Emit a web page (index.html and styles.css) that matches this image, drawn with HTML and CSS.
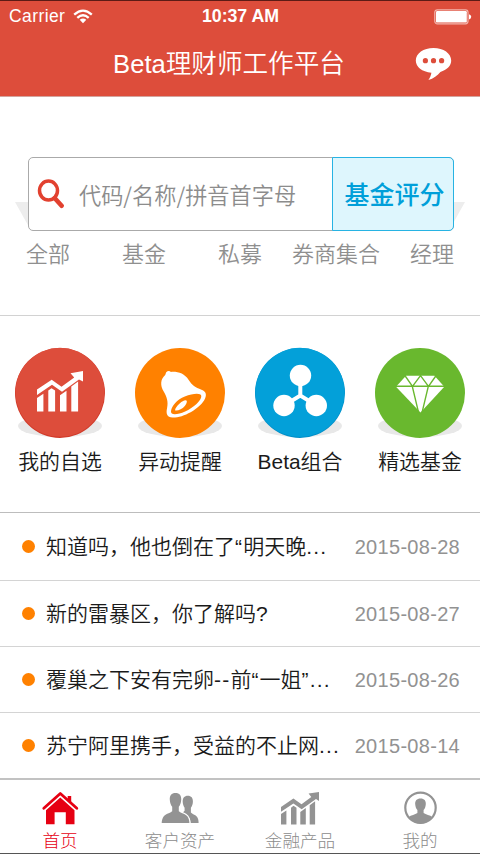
FILE: index.html
```html
<!DOCTYPE html>
<html lang="zh-CN">
<head>
<meta charset="utf-8">
<title>Beta理财师工作平台</title>
<link rel="stylesheet" href="styles.css">
</head>
<body>
<header class="header">
  <div class="status">
    <div class="carrier"><span>Carrier</span>
      <svg width="20" height="15" viewBox="0 0 20 15"><g fill="none" stroke="#fff" stroke-width="2.3"><path d="M1.2 5.6Q10-2.4 18.8 5.6"/><path d="M4.3 8.9Q10 3.7 15.7 8.9"/></g><path d="M6.7 10.8Q10 8 13.3 10.8L10 14.2z" fill="#fff"/></svg>
    </div>
    <span class="time">10:37 AM</span>
    <svg class="battery" width="38" height="16" viewBox="0 0 38 16"><rect x=".8" y=".8" width="33.2" height="14" rx="2.5" fill="none" stroke="#f3b5ad" stroke-width="1.2"/><rect x="2" y="2" width="30.8" height="11.6" rx="1.2" fill="#fff"/><path d="M35 5.2q2.2.5 2.2 2.6T35 10.4z" fill="#fff"/></svg>
  </div>
  <div class="titlebar">
    <h1>Beta理财师工作平台</h1>
    <svg class="chat" width="38" height="34" viewBox="0 0 38 34"><path d="M18.5 1C8.500 1 .8 6.400.8 13.600c0 6.500 6.200 11.400 15.600 12.200-.3 2.400-1.400 5-3 7.200 5-1.600 9.200-4.400 12-8.100 6.500-1.800 10.800-6.100 10.800-11.300C36.200 6.400 28.500 1 18.500 1z" fill="#fff"/><g fill="#dd4d3b"><circle cx="10.400" cy="13.700" r="2.600"/><circle cx="18.500" cy="13.700" r="2.600"/><circle cx="26.600" cy="13.700" r="2.600"/></g></svg>
  </div>
</header>
<main>
  <section class="search">
    <div class="box-wrap">
      <svg class="ribbon" width="450" height="28" viewBox="0 0 450 28"><path d="M0 0h14v25zM450 0h-14v25z" fill="#ededed"/></svg>
      <div class="box">
        <svg class="lens" width="28" height="30" viewBox="0 0 28 30"><ellipse cx="11.500" cy="11.600" rx="9" ry="9.500" fill="none" stroke="#e2412f" stroke-width="3.500"/><path d="M17.800 19.300L24.600 26.800" stroke="#e2412f" stroke-width="4.600" stroke-linecap="round"/></svg>
        <span class="placeholder">代码/名称/拼音首字母</span>
        <span class="score">基金评分</span>
      </div>
    </div>
    <nav class="filters"><span>全部</span><span>基金</span><span>私募</span><span>券商集合</span><span>经理</span></nav>
  </section>
  <section class="shortcuts">
    <div class="shortcut">
      <svg width="92" height="92" viewBox="0 0 92 92"><ellipse cx="46" cy="79" rx="42" ry="11" fill="#e8e8e8"/><circle cx="46" cy="46" r="45" fill="#d13a29"/><circle cx="46" cy="45.300" r="44.500" fill="#dd4d3b"/><g fill="#fff"><path d="M23 42.600L37.700 32.800l9.800 7L60.200 30.600l-3.700-4.400L69 24v10.600l-4-2.200-17 12.400-10-7-15 10.100z"/><path d="M23 51l6.400-4.200v17.800H23zM34.300 43.500l3.200-2.300 3.600 2.300v21.100h-6.800zM46 48.300l6.500-4.600v20.900H46zM57.300 39.600l6.800-5v30h-6.800z"/></g></svg>
      <span>我的自选</span>
    </div>
    <div class="shortcut">
      <svg width="92" height="92" viewBox="0 0 92 92"><ellipse cx="46" cy="79" rx="42" ry="11" fill="#e8e8e8"/><circle cx="46" cy="46" r="45" fill="#ff8100"/><path d="M32.200 25.200q2.300-2 4.800-.3c7.500-.4 13.500 1.700 17.700 8.100 3.400 5.200 6.500 7.500 12.800 9.700 5 1.700 5.500 5.600 2.700 10.500C65 62 49 71 38.500 70.600c-5.500-.2-6.700-3.900-5.400-9.600 1.300-6.300-.2-10.700-3.400-16.400-3.700-6.500-3.300-12.600 1.500-16.700z" fill="#fff"/><path d="M37 64.300c.8-5.700 6-11.500 13.800-14.700 8.200-3.400 16.300-3.700 16.500-.7.300 4.300-7.600 11.600-16.200 15.500-7.800 3.500-14.600 3.800-14.100-.1z" fill="#ff8100"/><path d="M41.500 61.500c2-3.700 6.500-7.800 10-8.300 2.200-.2 1.600 3-.7 5.700-2.800 3.400-7.400 5.200-9.800 4.400z" fill="#fff"/></svg>
      <span>异动提醒</span>
    </div>
    <div class="shortcut">
      <svg width="92" height="92" viewBox="0 0 92 92"><ellipse cx="46" cy="79" rx="42" ry="11" fill="#e8e8e8"/><circle cx="46" cy="46" r="45" fill="#028fc8"/><circle cx="46" cy="45.400" r="44.600" fill="#03a0d9"/><path d="M46.300 28v20.500M30 58.500l16.300-10 16.300 10" fill="none" stroke="#fff" stroke-width="4"/><g fill="#fff"><circle cx="46.500" cy="28.500" r="10.700"/><circle cx="30" cy="58.500" r="10.700"/><circle cx="62.300" cy="58.500" r="10.700"/></g></svg>
      <span>Beta组合</span>
    </div>
    <div class="shortcut">
      <svg width="92" height="92" viewBox="0 0 92 92"><ellipse cx="46" cy="79" rx="42" ry="11" fill="#e8e8e8"/><circle cx="46" cy="46" r="45" fill="#69b82e"/><path d="M32 28.700h28.500l9.800 11-23.800 25.700L22 39.700z" fill="#fff"/><path d="M21 39.300h50M30.500 28l8 11.300 8-10.600 8 10.600 8-11.300M38.300 39.300l6.700 28M54.300 39.300l-6.700 28" fill="none" stroke="#69b82e" stroke-width="1.400"/></svg>
      <span>精选基金</span>
    </div>
  </section>
  <ul class="news">
    <li><i></i><span class="headline">知道吗，他也倒在了<b>“</b>明天晚<b>...</b></span><time>2015-08-28</time></li>
    <li><i></i><span class="headline">新的雷暴区，你了解吗?</span><time>2015-08-27</time></li>
    <li><i></i><span class="headline">覆巢之下安有完卵<b>--</b>前<b>“</b>一姐<b>”...</b></span><time>2015-08-26</time></li>
    <li><i></i><span class="headline">苏宁阿里携手，受益的不止网<b>...</b></span><time>2015-08-14</time></li>
  </ul>
</main>
<nav class="tabs">
  <div class="tab active">
    <svg width="40" height="36" viewBox="0 0 40 36"><path d="M3.800 18.200L20.300 3.500 36.800 18.200" fill="none" stroke="#e60012" stroke-width="2.800" stroke-linecap="round" stroke-linejoin="round"/><path d="M27.700 6h3.500v7.500l-3.500-2.600zM20.300 7.600L34.500 20.200v14.100h-8.700V22.200H14.600v12.100H6V20.200z" fill="#e60012"/></svg>
    <span>首页</span>
  </div>
  <div class="tab">
    <svg width="40" height="36" viewBox="0 0 40 36"><g fill="#939393"><path d="M27.800 5.800c-3.400 0-5.300 2.200-5.100 6 .1 2.500.8 4.500 1.900 5.900v3.100c-1 1.100-2 1.800-3 2.500 3 .8 6.500 2 7.600 4.200.9 1.700 1.300 3.400 1.400 5.500h8c0-2.700-.5-5-1.900-6.500-1.500-1.600-4.500-2.200-5.800-3.900v-4.900c1.200-1.400 1.900-3.400 2-5.900.2-3.800-1.700-6-5.100-6z"/><path d="M15.500 2.900c-4 0-6 2.700-5.700 6.800.2 3 1 5.500 2.400 7v4.500c-1.800 1.700-6.500 2.500-8.400 5-1.400 1.800-2.100 4.300-2.100 6.800h27.700c0-2.500-.7-5-2.100-6.800-1.900-2.500-6.700-3.300-8.500-5v-4.500c1.400-1.500 2.200-4 2.400-7 .3-4.100-1.700-6.800-5.700-6.800z" stroke="#fff" stroke-width="2.200" paint-order="stroke"/></g></svg>
    <span>客户资产</span>
  </div>
  <div class="tab">
    <svg width="40" height="36" viewBox="0 0 40 36"><g fill="#939393"><path d="M1 17l12.400-8.500 8.100 5.700L31.300 7l-2.700-3.500L39 2v9l-3-2-14.300 10.300-8.300-5.900L1 21.700z"/><path d="M1 24l5.400-3.600v14H1zM11 17.700l2.500-2 3 2v16.700H11zM20.300 22l5.500-4v16.400h-5.500zM29.700 15.200l5.400-4v23.200h-5.400z"/></g></svg>
    <span>金融产品</span>
  </div>
  <div class="tab">
    <svg width="40" height="36" viewBox="0 0 40 36"><circle cx="20.500" cy="17.800" r="15.200" fill="#fff" stroke="#939393" stroke-width="2.200"/><path d="M20.500 8.500c-3.800 0-5.600 2.300-5.300 5.800.2 2.600 1 4.500 2.200 5.800v3c-2.300 1.700-6.400 1.900-8.900 4.200 2.500 3.600 7 6.200 12 6.200s9.500-2.600 12-6.200c-2.400-2.300-6.700-2.500-8.900-4.200v-3c1.200-1.300 2-3.200 2.200-5.800.3-3.500-1.500-5.800-5.300-5.800z" fill="#939393"/></svg>
    <span>我的</span>
  </div>
</nav>
</body>
</html>
```
FILE: styles.css
```css
* { box-sizing: border-box; }
body {
  margin: 0;
  width: 480px;
  height: 854px;
  display: flex;
  flex-direction: column;
  overflow: hidden;
  background: #fff;
  font-family: "Liberation Sans", "Noto Sans CJK SC", sans-serif;
  font-weight: 350;
}
svg { display: block; flex: none; }
span, time { white-space: nowrap; }

.header {
  height: 98px;
  background: #dd4d3b;
  border-top: 1px solid #5c1b15;
  border-bottom: 1px solid #d3a49e;
  color: #fff;
}
.status {
  height: 31px;
  padding: 0 8px 0 9px;
  display: grid;
  grid-template-columns: 1fr auto 1fr;
  align-items: center;
  font-size: 17.500px;
}
.carrier { display: flex; align-items: center; gap: 8px; letter-spacing: .4px; }
.time { font-weight: 700; font-size: 17.800px; letter-spacing: -.05px; }
.battery { justify-self: end; }
.titlebar {
  height: 64px;
  display: grid;
  grid-template-columns: 1fr auto 1fr;
  align-items: center;
}
.titlebar h1 {
  grid-column: 2;
  margin: 0;
  font-size: 25.600px;
  font-weight: 350;
  line-height: 62px;
  white-space: nowrap;
  transform: translateX(-11px);
}
.chat { justify-self: end; margin-right: 27px; }

.search { height: 218px; padding-top: 59px; border-bottom: 1px solid #d2d2d2; }
.box-wrap { position: relative; margin: 0 26px 0 28px; }
.ribbon { position: absolute; left: -13px; top: 45px; }
.box {
  position: relative;
  height: 74px;
  display: flex;
  align-items: center;
  border: 1px solid #aaa;
  border-radius: 5px;
  background: #fff;
}
.lens { margin-left: 8px; }
.placeholder {
  flex: 1;
  margin-left: 14px;
  font-family: "Noto Sans CJK SC", sans-serif;
  font-size: 22.200px;
  line-height: 72px;
  color: #8c8c8c;
}
.score {
  width: 122px;
  height: 74px;
  margin: -1px;
  padding-left: 3px;
  border: 1px solid #27b3e3;
  border-radius: 0 5px 5px 0;
  background: #def6fd;
  color: #009fd9;
  font-size: 25px;
  font-weight: 500;
  line-height: 75px;
  text-align: center;
}
.filters {
  display: flex;
  justify-content: flex-start;
  gap: 52px;
  padding-left: 26px;
  height: 46px;
  line-height: 48px;
  font-size: 22px;
  color: #8f8f8f;
}
.filters span:nth-child(n+4) { margin-left: -22px; }

main { padding-top: 1px; }
.shortcuts {
  height: 197px;
  padding-top: 31px;
  display: grid;
  grid-template-columns: repeat(4, 120px);
  border-bottom: 1px solid #bdbdbd;
}
.shortcut { display: flex; flex-direction: column; align-items: center; font-size: 20.900px; color: #1a1a1a; }
.shortcut span { line-height: 45px; }

.news { margin: 0; padding: 0; list-style: none; color: #1a1a1a; }
.news li {
  height: 66px;
  padding: 0 20px 0 22px;
  display: flex;
  align-items: center;
  border-bottom: 1px solid #d4d4d4;
}
.news li:first-child { height: 68px; }
.news li:last-child { border: 0; height: 65px; }
.news i { width: 13px; height: 13px; border-radius: 50%; background: #ff8100; margin-right: 11px; }
.headline { flex: 1; font-size: 21px; line-height: 64px; }
.headline b { font-weight: inherit; letter-spacing: 1.200px; }
.news time { font-size: 20px; letter-spacing: .3px; color: #929292; padding-top: 1px; }

.tabs {
  height: 76px;
  margin-top: auto;
  padding-top: 10px;
  display: grid;
  grid-template-columns: repeat(4, 120px);
  border-top: 2px solid #c2c2c2;
  border-bottom: 1px solid #555;
}
.tab { display: flex; flex-direction: column; align-items: center; font-size: 17.600px; font-weight: 300; color: #8c8c8c; }
.tab span { line-height: 30px; }
.active { color: #e60012; }
```
